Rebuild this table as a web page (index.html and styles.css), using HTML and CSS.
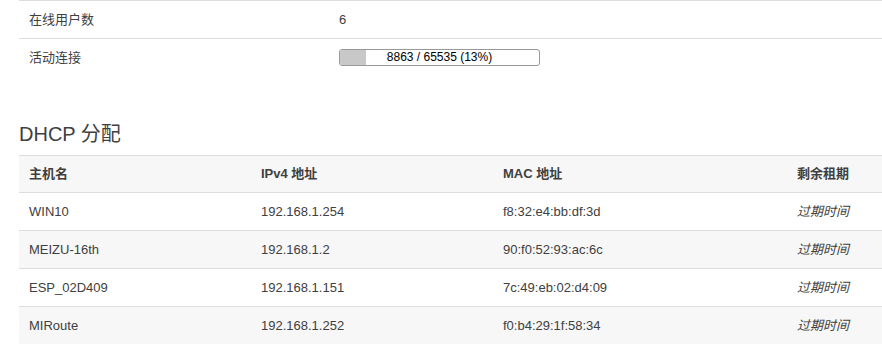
FILE: index.html
```html
<!DOCTYPE html>
<html lang="zh-CN">
<head>
<meta charset="utf-8">
<title>状态</title>
<link rel="stylesheet" href="styles.css">
</head>
<body>
<div class="page">
  <table class="info">
    <tr>
      <td class="info-label">在线用户数</td>
      <td>6</td>
    </tr>
    <tr>
      <td class="info-label">活动连接</td>
      <td>
        <div class="bar">
          <div class="bar-fill" style="width:13%"></div>
          <span class="bar-text">8863 / 65535 (13%)</span>
        </div>
      </td>
    </tr>
  </table>

  <h3 class="section-title">DHCP 分配</h3>

  <table class="leases">
    <thead>
      <tr>
        <th class="c1">主机名</th>
        <th class="c2">IPv4 地址</th>
        <th class="c3">MAC 地址</th>
        <th class="c4">剩余租期</th>
      </tr>
    </thead>
    <tbody>
      <tr><td>WIN10</td><td>192.168.1.254</td><td>f8:32:e4:bb:df:3d</td><td class="exp">过期时间</td></tr>
      <tr><td>MEIZU-16th</td><td>192.168.1.2</td><td>90:f0:52:93:ac:6c</td><td class="exp">过期时间</td></tr>
      <tr><td>ESP_02D409</td><td>192.168.1.151</td><td>7c:49:eb:02:d4:09</td><td class="exp">过期时间</td></tr>
      <tr><td>MIRoute</td><td>192.168.1.252</td><td>f0:b4:29:1f:58:34</td><td class="exp">过期时间</td></tr>
    </tbody>
  </table>
</div>
</body>
</html>
```
FILE: styles.css
```css
html, body {
  margin: 0;
  padding: 0;
  background: #fff;
}
body {
  font-family: "Liberation Sans", "Noto Sans CJK SC", sans-serif;
  font-size: 13px;
  color: #404040;
}
.page {
  padding-left: 19px;
  overflow: hidden;
}
table {
  border-collapse: collapse;
  border-spacing: 0;
  width: 870px;
  table-layout: fixed;
}
td, th {
  padding: 0 10px;
  height: 37px;
  text-align: left;
  vertical-align: middle;
  border-top: 1px solid #dddddd;
  line-height: 18px;
}
.info-label {
  width: 290px;
}
.bar {
  position: relative;
  width: 199px;
  height: 15px;
  border: 1px solid #999;
  border-radius: 3px;
  background: #fff;
  overflow: hidden;
}
.bar-fill {
  height: 100%;
  background: #c8c8c8;
}
.bar-text {
  position: absolute;
  left: 0;
  right: 0;
  top: 0;
  text-align: center;
  font-size: 12px;
  line-height: 15px;
  color: #000;
}
.section-title {
  margin: 48px 0 0;
  height: 31px;
  font-size: 20px;
  font-weight: normal;
  line-height: 20px;
  color: #404040;
}
.leases th {
  height: 36px;
  font-weight: bold;
  color: #404040;
  background: #f7f7f7;
}
.leases .c1 { width: 212px; }
.leases .c2 { width: 222px; }
.leases .c3 { width: 274px; }
.leases tbody tr:nth-child(even) td {
  background: #f7f7f7;
}
.exp {
  font-style: italic;
}
```
